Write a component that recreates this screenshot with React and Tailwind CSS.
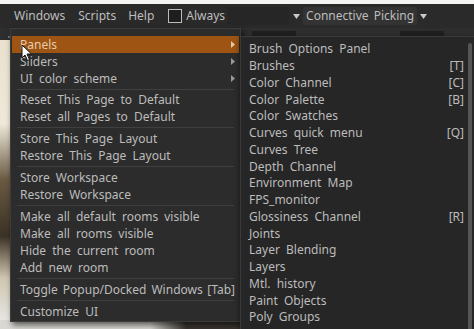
// Context menu overlay: Windows > Panels submenu open over a dark app chrome.
import React from 'react';

const MAIN = [
  [{ label: 'Panels', sub: true, active: true }, { label: 'Sliders', sub: true }, { label: 'UI color scheme', sub: true }],
  [{ label: 'Reset This Page to Default' }, { label: 'Reset all Pages to Default' }],
  [{ label: 'Store This Page Layout' }, { label: 'Restore This Page Layout' }],
  [{ label: 'Store Workspace' }, { label: 'Restore Workspace' }],
  [
    { label: 'Make all default rooms visible' },
    { label: 'Make all rooms visible' },
    { label: 'Hide the current room' },
    { label: 'Add new room' },
  ],
  [{ label: 'Toggle Popup/Docked Windows', key: '[Tab]' }],
  [{ label: 'Customize UI' }],
];

const PANELS = [
  ['Brush Options Panel'],
  ['Brushes', '[T]'],
  ['Color Channel', '[C]'],
  ['Color Palette', '[B]'],
  ['Color Swatches'],
  ['Curves quick menu', '[Q]'],
  ['Curves Tree'],
  ['Depth Channel'],
  ['Environment Map'],
  ['FPS_monitor'],
  ['Glossiness Channel', '[R]'],
  ['Joints'],
  ['Layer Blending'],
  ['Layers'],
  ['Mtl. history'],
  ['Paint Objects'],
  ['Poly Groups'],
];

const font = "font-['Noto_Sans','DejaVu_Sans',sans-serif]";

function Caret() {
  return (
    <svg width="7" height="5" viewBox="0 0 7 5" className="shrink-0">
      <path d="M0 0h7L3.5 5z" fill="#c9c9c9" />
    </svg>
  );
}

function Arrow({ light }) {
  return (
    <svg width="4" height="7" viewBox="0 0 4 7" className="shrink-0">
      <path d="M0 0l4 3.5L0 7z" fill={light ? '#e6c9a8' : '#9a9a9a'} />
    </svg>
  );
}

function MenuBar() {
  return (
    <div className="flex h-[24px] items-center bg-[#2a2a2a] pl-[14px] text-[12px] text-[#bdbdbd] [word-spacing:2px]">
      <span>Windows</span>
      <span className="ml-[13px]">Scripts</span>
      <span className="ml-[12px]">Help</span>
      <span className="ml-[14px] h-[14px] w-[14px] border border-[#bdbdbd] bg-[#1e1e1e]" />
      <span className="ml-[4px]">Always</span>
      <span className="ml-[2px] h-[18px] w-[62px] bg-[#262626]" />
      <span className="ml-[4px]"><Caret /></span>
      <span className="ml-[3px] flex h-[18px] items-center bg-[#333] px-[3px]">Connective Picking</span>
      <span className="ml-[3px]"><Caret /></span>
    </div>
  );
}

function ToolRow() {
  return (
    <div className="flex h-[12px] items-start overflow-hidden bg-[#2e2e2e]">
      <span className="ml-[8px] mt-[8px] h-[2px] w-[2px] rounded-full bg-[#6b8fb8]" />
      <span className="ml-[242px] mt-[3px] h-[10px] w-[44px] bg-[#1f1f1f]" />
      <span className="ml-[104px] mt-[3px] h-[10px] w-[44px] bg-[#1f1f1f]" />
    </div>
  );
}

function MainMenu() {
  return (
    <div className="absolute left-[10px] top-[28px] w-[231px] border border-[#3c3c3c] bg-[#2c2c2c] pt-[7px] pb-[1px] shadow-[2px_3px_6px_rgba(0,0,0,0.6)]">
      {MAIN.map((group, gi) => (
        <div key={gi}>
          {gi > 0 && <div className={`mx-[6px] ${gi === 1 ? 'my-[1.5px]' : 'my-[2px]'} h-px bg-[#3f3f3f]`} />}
          {group.map((it) => (
            <div
              key={it.label}
              className={`mx-[1px] flex h-[17px] items-center justify-between pl-[8px] pr-[4px] text-[12px] [word-spacing:3px] ${
                it.active ? 'bg-[#9e5412] text-[#e6cbad]' : 'text-[#bcbcbc]'
              }`}
            >
              <span className={it.key ? '[word-spacing:2px]' : ''}>{it.label}</span>
              {it.sub && <Arrow light={it.active} />}
              {it.key && <span className="text-[#bcbcbc]">{it.key}</span>}
            </div>
          ))}
        </div>
      ))}
    </div>
  );
}

function PanelsMenu() {
  return (
    <div className="absolute left-[240px] top-[36px] bottom-0 flex w-[236px] border-l border-t border-[#3a3a3a] bg-[#262626] shadow-[0_2px_6px_rgba(0,0,0,0.5)]">
      <div className="flex-1 pt-[4px] pr-[4px]">
        {PANELS.map(([label, key]) => (
          <div key={label} className="flex h-[16.75px] items-center justify-between pl-[8px] text-[12px] text-[#bcbcbc] [word-spacing:3px]">
            <span>{label}</span>
            {key && <span>{key}</span>}
          </div>
        ))}
      </div>
      <div className="mr-[4px] mt-[6px] w-[4px] rounded-t-[2px] bg-[#555]" />
    </div>
  );
}

function Cursor() {
  return (
    <svg className="absolute left-[21px] top-[44px]" width="12" height="18" viewBox="0 0 12 18">
      <path d="M1 1v13l3-3 2.5 5.5 2-1L6 10h4.5z" fill="#fff" stroke="#111" strokeWidth="1" strokeLinejoin="round" />
    </svg>
  );
}

export default function App() {
  return (
    <div className={`relative h-[329px] w-[474px] overflow-hidden bg-[#d9d8d3] ${font}`}>
      <div className="h-[4px] bg-[#f4f4f2]" />
      <MenuBar />
      <ToolRow />
      {/* blurry photo strip on the left edge */}
      <div className="absolute left-0 top-[40px] h-[280px] w-[12px] bg-[linear-gradient(to_bottom,#e9e2cf_0%,#efe9da_30%,#6a5a42_50%,#3b3226_70%,#cfc6b0_85%,#e7e6e2_100%)]" />
      <div className="absolute bottom-0 left-[150px] h-[12px] w-[90px] bg-[linear-gradient(to_right,#d9d8d3,#3a3530_40%,#3a3530)]" />
      <MainMenu />
      <PanelsMenu />
      <Cursor />
    </div>
  );
}
